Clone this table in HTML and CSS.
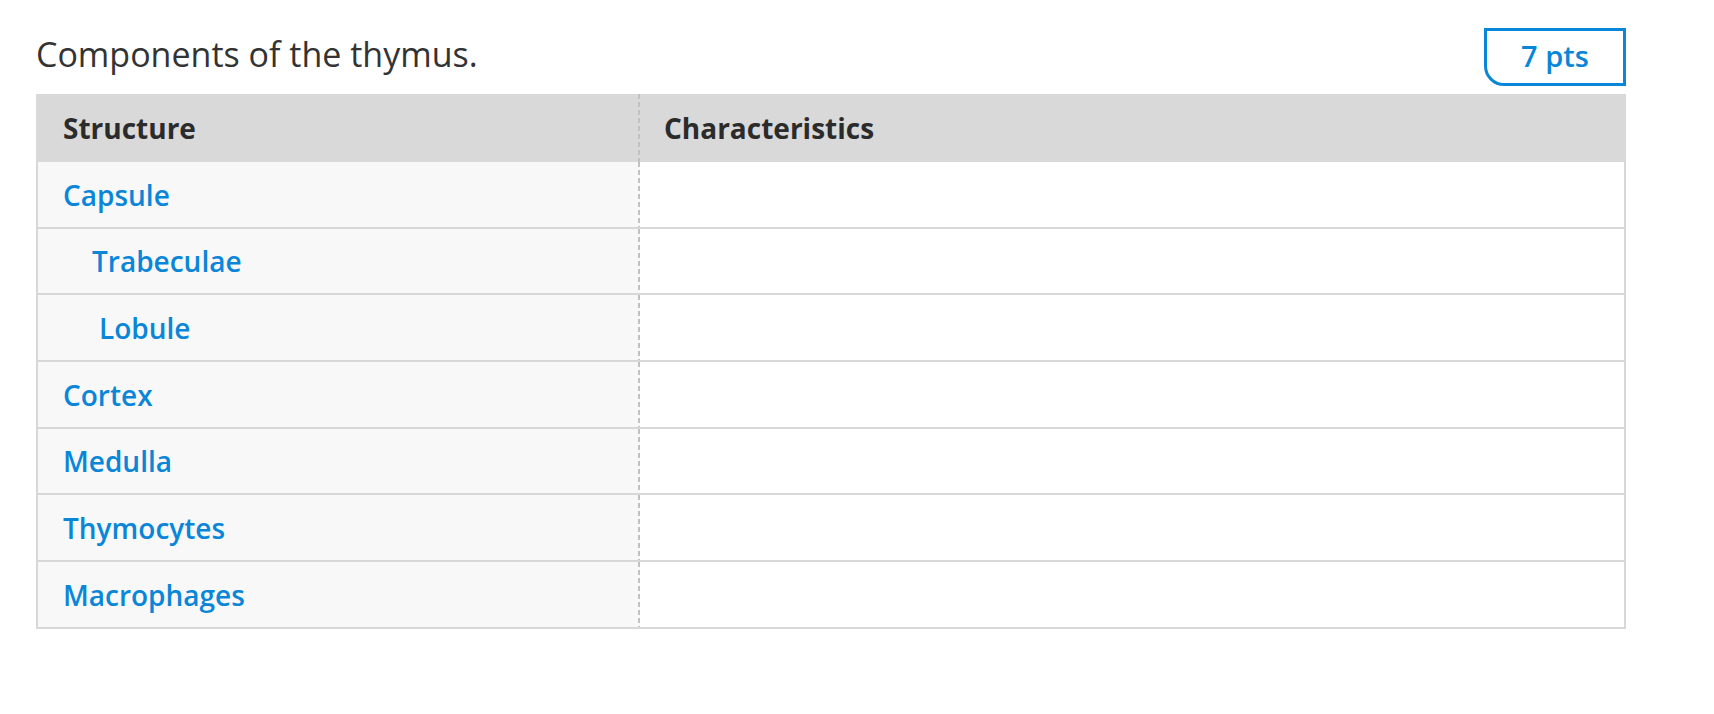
FILE: index.html
```html
<!DOCTYPE html>
<html lang="en">
<head>
<meta charset="utf-8">
<title>Components of the thymus</title>
<link rel="stylesheet" href="styles.css">
</head>
<body>
<div class="card">
  <div class="top">
    <div class="title">Components of the thymus.</div>
    <div class="badge">7 pts</div>
  </div>
  <div class="table">
    <div class="row head">
      <div class="c1">Structure</div>
      <div class="c2">Characteristics</div>
    </div>
    <div class="row"><div class="c1"><span class="link">Capsule</span></div><div class="c2"></div></div>
    <div class="row"><div class="c1"><span class="link ind1">Trabeculae</span></div><div class="c2"></div></div>
    <div class="row"><div class="c1"><span class="link ind2">Lobule</span></div><div class="c2"></div></div>
    <div class="row"><div class="c1"><span class="link">Cortex</span></div><div class="c2"></div></div>
    <div class="row"><div class="c1"><span class="link">Medulla</span></div><div class="c2"></div></div>
    <div class="row"><div class="c1"><span class="link">Thymocytes</span></div><div class="c2"></div></div>
    <div class="row last"><div class="c1"><span class="link">Macrophages</span></div><div class="c2"></div></div>
  </div>
</div>
</body>
</html>
```
FILE: styles.css
```css
* { box-sizing: border-box; }
html, body { margin: 0; padding: 0; background: #fff; }
body {
  font-family: "Open Sans", "Liberation Sans", sans-serif;
  padding: 28px 0 0 36px;
}
.card { width: 1590px; }
.top {
  display: flex;
  justify-content: space-between;
  align-items: center;
  margin-bottom: 8px;
}
.title {
  font-size: 34px;
  font-weight: 400;
  color: #333;
  padding-bottom: 6px;
  line-height: 1.2;
}
.badge {
  width: 142px;
  height: 58px;
  border: 3px solid #0a86d9;
  border-radius: 0 0 0 20px;
  color: #0a86d9;
  font-size: 29px;
  font-weight: 600;
  display: flex;
  align-items: center;
  justify-content: center;
  padding-bottom: 3px;
}
.table {
  border-bottom: 2px solid #d8d8d8;
}
.row {
  display: grid;
  grid-template-columns: 602px 1fr;
  height: 66.67px;
  border-left: 2px solid #d8d8d8;
  border-right: 2px solid #d8d8d8;
  border-bottom: 2px solid #d8d8d8;
}
.row.last { border-bottom: none; height: 64.67px; }
.row.head {
  height: 68px;
  background: #d9d9d9;
  border-color: #d9d9d9;
  border-bottom: none;
}
.c1 {
  display: flex;
  align-items: center;
  padding-left: 25px;
  background-color: #f8f8f8;
  background-image: repeating-linear-gradient(to bottom, #c2c2c2 0 5px, transparent 5px 8px);
  background-size: 2px 100%;
  background-position: right top;
  background-repeat: no-repeat;
}
.c2 {
  display: flex;
  align-items: center;
  padding-left: 24px;
  background: #fff;
}
.head .c1, .head .c2 {
  background-color: #d9d9d9;
  font-size: 28px;
  font-weight: 700;
  color: #2b2b2b;
}
.head .c2 { background-image: none; }
.link {
  font-size: 28px;
  font-weight: 600;
  color: #0a86d9;
  padding-top: 1px;
}
.ind1 { margin-left: 29px; }
.ind2 { margin-left: 36px; }
```
